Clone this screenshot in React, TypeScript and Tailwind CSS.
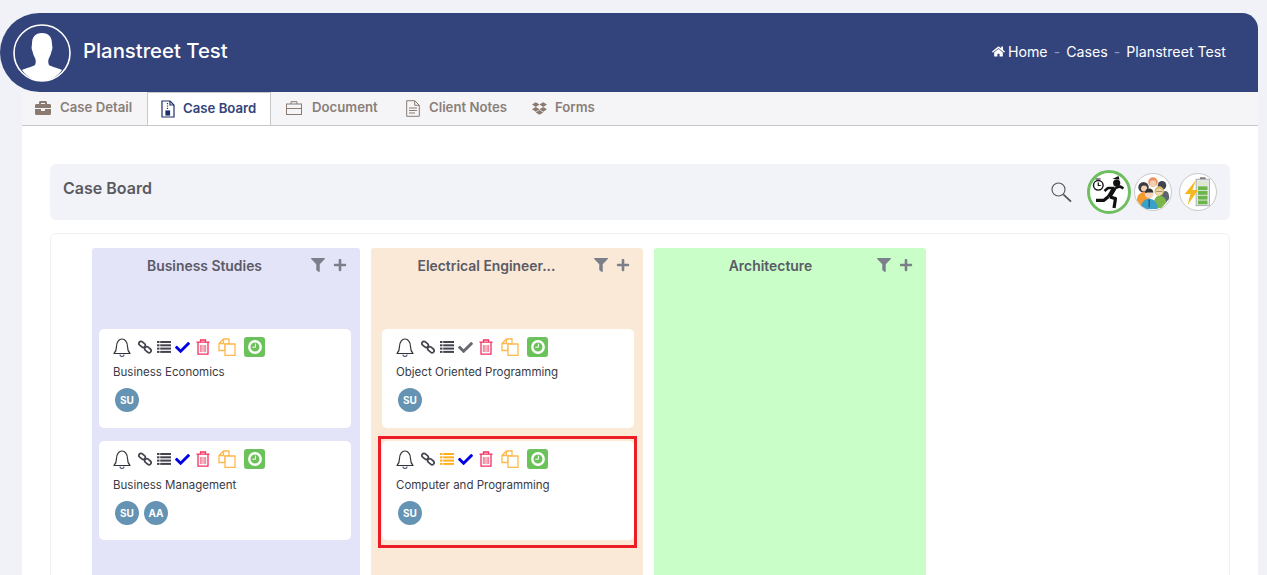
import React from 'react';
import { FaBriefcase, FaHome, FaFilter, FaPlus, FaCheck, FaDropbox } from 'react-icons/fa';

const AvatarIcon = () => (
  <svg viewBox="0 0 58 58" className="w-[58px] h-[58px]">
    <circle cx="29" cy="29" r="28" fill="none" stroke="#fff" strokeWidth="1.6" />
    <path d="M29 9c-7 0-10 4-10 11 0 2-1 3 0 6 1 2 1 5 3 8 1 2 1 5 0 7-3 2-9 3-13 5 5 7 12 11 20 11s15-4 20-11c-4-2-10-3-13-5-1-2-1-5 0-7 2-3 2-6 3-8 1-3 0-4 0-6 0-7-3-11-10-11z" fill="#fff" />
  </svg>
);

const ZipFileIcon = () => (
  <svg viewBox="0 0 14 18" className="w-[14px] h-[18px]" fill="none" stroke="#1e2f6b" strokeWidth="1.2">
    <path d="M1 1h8l4 4v12H1z" />
    <path d="M9 1v4h4" />
    <rect x="5" y="11" width="3.5" height="4" fill="#1e2f6b" />
    <path d="M6.5 3v7" strokeDasharray="1.2 1.2" />
  </svg>
);

const CaseOutlineIcon = () => (
  <svg viewBox="0 0 16 14" className="w-4 h-[14px]" fill="none" stroke="#8a7a70" strokeWidth="1">
    <rect x="0.5" y="3" width="15" height="10.5" />
    <path d="M5 3V0.7h6V3M0.5 7.5h15M7 7.5h2" />
  </svg>
);

const NotesIcon = () => (
  <svg viewBox="0 0 14 17" className="w-[14px] h-[17px]" fill="none" stroke="#8a7a70" strokeWidth="1">
    <path d="M0.7 0.7h8l4.6 4.6v11H0.7z" />
    <path d="M8.7 0.7v4.6h4.6M3 8h8M3 10.5h8M3 13h6" />
  </svg>
);

const BellIcon = () => (
  <svg viewBox="0 0 18 19" className="w-[18px] h-[19px]" fill="none" stroke="#33333b" strokeWidth="1.2">
    <path d="M1 15.5c2-2 2.5-4 2.5-7C3.5 4 6 1 9 1s5.5 3 5.5 7.5c0 3 .5 5 2.5 7z" strokeLinejoin="round" />
    <path d="M7 16.5c0 1.3 1 2 2 2s2-.7 2-2" stroke="#55607a" />
  </svg>
);

const LinkIcon = () => (
  <svg viewBox="0 0 14 14" className="w-[14px] h-[14px]" fill="none" stroke="#44444f" strokeWidth="1.7">
    <rect x="0.6" y="2.2" width="7" height="4.2" rx="2.1" transform="rotate(40 4 4.3)" />
    <rect x="6.4" y="7.6" width="7" height="4.2" rx="2.1" transform="rotate(40 9.9 9.7)" />
  </svg>
);

const ListIcon = ({ color }: { color: string }) => (
  <svg viewBox="0 0 14 12" className="w-[14px] h-3" fill={color}>
    <rect x="0" y="0" width="2.5" height="2" />
    <rect x="3.2" y="0" width="10.8" height="2" />
    <rect x="0" y="3.3" width="2.5" height="2" />
    <rect x="3.2" y="3.3" width="10.8" height="2" />
    <rect x="0" y="6.6" width="2.5" height="2" />
    <rect x="3.2" y="6.6" width="10.8" height="2" />
    <rect x="0" y="9.9" width="2.5" height="2" />
    <rect x="3.2" y="9.9" width="10.8" height="2" />
  </svg>
);

const TrashIcon = () => (
  <svg viewBox="0 0 14 16" className="w-[14px] h-4" fill="none" stroke="#f5305f" strokeWidth="1.3">
    <path d="M0.5 3.2h13M4.5 3V1h5v2M2 3.2v12h10v-12" />
    <path d="M4.5 6v7M6 6v7M8 6v7M9.5 6v7" stroke="#f08aa0" />
  </svg>
);

const CopyIcon = () => (
  <svg viewBox="0 0 18 18" className="w-[18px] h-[18px]" fill="none" stroke="#ffb84d" strokeWidth="1.3">
    <path d="M1 5.5 5.5 1H11v5H7v6.5H1z" fill="#fff" />
    <path d="M1 5.5h4.5V1" />
    <path d="M7 6h10v11.3H7z" fill="#fff" />
  </svg>
);

const ClockTile = () => (
  <div className="w-[21px] h-5 rounded-[3px] bg-[#6cc25a] flex items-center justify-center">
    <svg viewBox="0 0 14 14" className="w-[14px] h-[14px]" fill="none">
      <circle cx="7" cy="7" r="5.7" stroke="#fff" strokeWidth="2.4" />
      <path d="M7.4 3.6v3.6H4.4" stroke="#fff" strokeWidth="1" />
    </svg>
  </div>
);

const SearchIcon = () => (
  <svg viewBox="0 0 21 21" className="w-[21px] h-[21px]" fill="none" stroke="#555">
    <circle cx="7.5" cy="7.5" r="6.5" strokeWidth="1.1" />
    <path d="M12.3 12.3 20 19.6" strokeWidth="1.8" />
  </svg>
);

const RunnerIcon = () => (
  <div className="w-[44px] h-[44px] rounded-full border-[3px] border-[#6fbf60] bg-white flex items-center justify-center">
    <svg viewBox="0 0 38 38" className="w-[38px] h-[38px]">
      <circle cx="8.3" cy="12.3" r="4.8" fill="none" stroke="#111" strokeWidth="1.4" />
      <path d="M8.3 9.5v3h2.5M5.5 6h5" fill="none" stroke="#111" strokeWidth="1.2" />
      <circle cx="26.7" cy="10" r="3.6" fill="#111" />
      <path d="M22.5 6l6-3 1 3.5z" fill="#111" />
      <path d="M25 15l5-1.5 3.5 1.8M24.5 15H18l-3.5 3" fill="none" stroke="#111" strokeWidth="2.6" strokeLinejoin="round" />
      <path d="M24.5 15l-5.5 9" fill="none" stroke="#111" strokeWidth="4.4" />
      <path d="M18.5 23.5l-4.5 3.8H6M20 24l5.5 1.6L24 35" fill="none" stroke="#111" strokeWidth="3.2" strokeLinejoin="round" />
    </svg>
  </div>
);

const TeamIcon = () => (
  <div className="w-[38px] h-[38px] rounded-full border border-[#c9c9c9] bg-white overflow-hidden">
    <svg viewBox="0 0 38 38" className="w-full h-full">
      <circle cx="19" cy="8.5" r="5" fill="#e8935f" />
      <circle cx="19" cy="10" r="3.4" fill="#f3cfb2" />
      <circle cx="28.5" cy="12" r="4.5" fill="#3f4450" />
      <circle cx="9" cy="14" r="5.5" fill="#3c3c44" />
      <circle cx="9.6" cy="15.4" r="3.2" fill="#f3cfb2" />
      <path d="M2 28c0-6 4-9 8-9s6 3 6 9v6H6z" fill="#f59a2e" />
      <path d="M26 26c0-5 3-8 6-8s4 3 4 8l-4 5h-6z" fill="#5c6470" />
      <path d="M20 32c0-6 2-9 6-9s7 3 7 7l-5 6h-8z" fill="#7ab648" />
      <circle cx="25.5" cy="18" r="5" fill="#d8bd6d" />
      <circle cx="25.5" cy="19" r="3.4" fill="#f0d8b0" />
      <path d="M22.5 18.4h6" stroke="#8a7a50" strokeWidth="0.8" />
      <path d="M6 37c0-7 4-11 9-11s9 4 9 11z" fill="#3a9fc9" />
      <circle cx="15" cy="21" r="4.6" fill="#f6d3b8" />
      <path d="M10.5 20c0-3 2-4.6 4.5-4.6s4 1.6 4.5 4c-3 .2-6-.2-9 .6z" fill="#2f2f35" />
      <path d="M15 27v8" stroke="#1f5f8a" strokeWidth="1.6" />
    </svg>
  </div>
);

const BatteryIcon = () => (
  <div className="w-[38px] h-[38px] rounded-full border border-[#c9c9c9] bg-white overflow-hidden">
    <svg viewBox="0 0 38 38" className="w-full h-full">
      <rect x="21" y="3.5" width="6" height="2" fill="#777" />
      <rect x="17" y="5.5" width="14" height="28" fill="#e6e6e6" stroke="#999" strokeWidth="0.8" />
      <rect x="19" y="8" width="10" height="4" fill="#d9e8cf" />
      <rect x="19" y="13" width="10" height="4" fill="#69b64a" />
      <rect x="19" y="18" width="10" height="4" fill="#69b64a" />
      <rect x="19" y="23" width="10" height="4" fill="#69b64a" />
      <rect x="19" y="28" width="10" height="4" fill="#69b64a" />
      <path d="M17 6 5 21h6l-3 12 11-16h-6z" fill="#f5b91f" />
    </svg>
  </div>
);

type Card = { title: string; users: string[]; listActive?: boolean; doneGray?: boolean; selected?: boolean };

const BoardCard = ({ card, second }: { card: Card; second: boolean }) => (
  <div className="relative w-[252px] h-[99px] bg-white rounded-[5px] pl-[14px] pt-2">
    <div className="flex items-center h-5">
      <BellIcon />
      <div className="ml-[7px] flex"><LinkIcon /></div>
      <div className="ml-[5px] flex"><ListIcon color={card.listActive ? '#ffb020' : '#44444f'} /></div>
      <FaCheck size={15} className={card.doneGray ? 'text-[#666a70] ml-1' : 'text-[#0000e6] ml-1'} />
      <div className="ml-[6px] flex"><TrashIcon /></div>
      <div className="ml-[8px] flex"><CopyIcon /></div>
      <div className="ml-[8px]"><ClockTile /></div>
    </div>
    <div className={second ? 'text-[11.5px] leading-4 text-[#3a3a44] mt-[8px]' : 'text-[11.5px] leading-4 text-[#3a3a44] mt-[7px]'}>{card.title}</div>
    <div className="flex gap-[5px] ml-[2px] mt-[8px]">
      {card.users.map((u) => (
        <div key={u} className="w-6 h-6 rounded-full bg-[#6593b3] text-white text-[10px] font-bold flex items-center justify-center">
          {u}
        </div>
      ))}
    </div>
    {card.selected && <div className="absolute -left-1 -top-[5px] w-[259px] h-[112px] border-[3px] border-[#ee1c25]" />}
  </div>
);

const columns = [
  {
    title: 'Business Studies',
    box: 'w-[268px] bg-[#e4e4f9] pl-[7px]',
    head: 'pl-[6px]',
    cards: [
      { title: 'Business Economics', users: ['SU'] },
      { title: 'Business Management', users: ['SU', 'AA'] },
    ] as Card[],
  },
  {
    title: 'Electrical Engineer...',
    box: 'w-[272px] bg-[#f9e9d6] pl-[11px]',
    head: 'pl-[4px]',
    cards: [
      { title: 'Object Oriented Programming', users: ['SU'], doneGray: true },
      { title: 'Computer and Programming', users: ['SU'], listActive: true, selected: true },
    ] as Card[],
  },
  { title: 'Architecture', box: 'w-[272px] bg-[#c9fec9] pl-[7px]', head: 'pl-[10px]', cards: [] as Card[] },
];

const tabClass = 'h-[32px] flex items-center text-[13.2px] font-semibold text-[#8a7f78]';

export default function App() {
  return (
    <div className="h-[575px] overflow-hidden bg-[#f1f2f8] pt-[13px]" style={{ fontFamily: 'Inter, "Noto Sans", sans-serif' }}>
      {/* top banner */}
      <div className="w-[1258px] h-[79px] bg-[#33437b] rounded-l-[40px] rounded-tr-[16px] flex items-center pl-[13px] pr-[32px]">
        <AvatarIcon />
        <div className="ml-[12px] mb-[3px] text-white text-[20.3px] font-medium">Planstreet Test</div>
        <div className="ml-auto flex items-center text-[14.2px] text-white mb-[2px]">
          <FaHome size={13} className="mr-[3px]" />
          <span>Home</span>
          <span className="mx-[6px] text-[#8f9abf]">-</span>
          <span>Cases</span>
          <span className="mx-[6px] text-[#8f9abf]">-</span>
          <span>Planstreet Test</span>
        </div>
      </div>

      <div className="ml-[22px] w-[1236px] h-[483px] bg-white">
        {/* tabs */}
        <div className="h-[34px] bg-[#f5f5f8] border-b border-[#c8c8c8] flex">
          <div className={`${tabClass} w-[125px] pl-[13px] gap-[9px]`}>
            <FaBriefcase size={16} className="text-[#8a7a70]" />
            Case Detail
          </div>
          <div className="w-[124px] h-[33px] flex items-center pl-[13px] pb-[1px] gap-2 bg-white border-x border-t border-[#c8c8c8] text-[13.2px] font-semibold text-[#33437b]">
            <ZipFileIcon />
            Case Board
          </div>
          <div className={`${tabClass} w-[120px] pl-[15px] gap-[10px]`}>
            <CaseOutlineIcon />
            Document
          </div>
          <div className={`${tabClass} w-[127px] pl-[15px] gap-[9px]`}>
            <NotesIcon />
            Client Notes
          </div>
          <div className={`${tabClass} pl-[14px] gap-[8px]`}>
            <FaDropbox size={15} className="text-[#8a7a70]" />
            Forms
          </div>
        </div>

        <div className="pl-[28px] pt-[38px] w-[1208px]">
          {/* case board bar */}
          <div className="h-[56px] bg-[#f2f3f8] rounded-[6px] flex items-center pl-[13px] pr-[13px]">
            <div className="text-[16px] font-semibold text-[#5a5a62] mb-[9px]">Case Board</div>
            <div className="ml-auto mr-[15px] flex"><SearchIcon /></div>
            <RunnerIcon />
            <div className="ml-[3px]"><TeamIcon /></div>
            <div className="ml-[7px]"><BatteryIcon /></div>
          </div>

          {/* board */}
          <div className="mt-[13px] h-[400px] border border-[#f0f0f3] rounded-[6px] pl-[41px] pt-[14px] flex gap-[11px]">
            {columns.map((col) => (
              <div key={col.title} className={`${col.box} h-[340px] rounded-t-[3px]`}>
                <div className="flex h-[36px] items-center -ml-[7px] pr-[13px]">
                  <div className={`${col.head} flex-1 text-center text-[13.9px] font-semibold text-[#5a5a66]`}>{col.title}</div>
                  <FaFilter size={14} className="text-[#7b7f8a] mb-[2px]" />
                  <FaPlus size={14} className="text-[#7b7f8a] ml-[8px] mb-[2px]" />
                </div>
                <div className="mt-[45px] flex flex-col gap-[13px]">
                  {col.cards.map((card, i) => (
                    <BoardCard key={card.title} card={card} second={i === 1} />
                  ))}
                </div>
              </div>
            ))}
          </div>
        </div>
      </div>
    </div>
  );
}
